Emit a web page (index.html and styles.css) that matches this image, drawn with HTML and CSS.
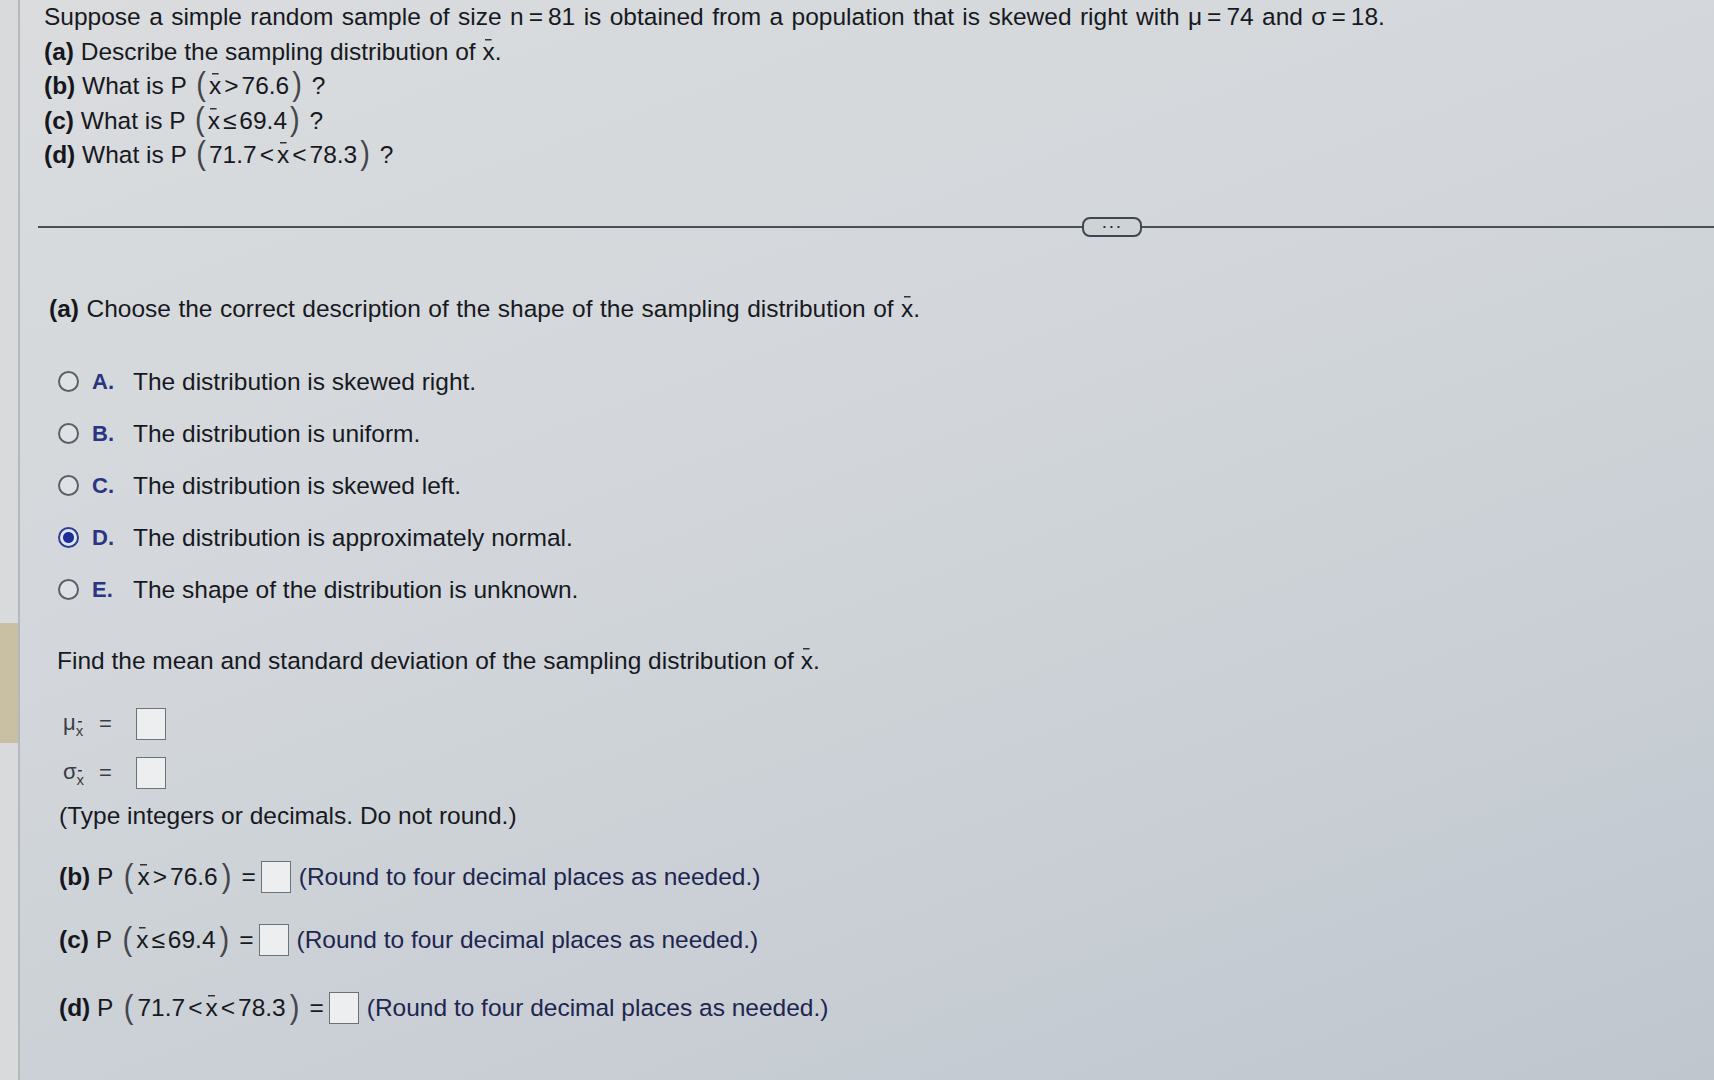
FILE: index.html
```html
<!DOCTYPE html>
<html>
<head>
<meta charset="utf-8">
<link rel="stylesheet" href="styles.css">
</head>
<body>
<div class="page">
  <div class="rail"><div class="rail-mark"></div></div>
  <main class="content">
    <section class="question">
      <p class="line title">Suppose a simple random sample of size n<span class="op">=</span>81 is obtained from a population that is skewed right with μ<span class="op">=</span>74 and σ<span class="op">=</span>18.</p>
      <p class="line"><b>(a)</b> Describe the sampling distribution of <span class="xbar">x</span>.</p>
      <p class="line"><b>(b)</b> What is P <span class="par">(</span><span class="xbar">x</span><span class="op">&gt;</span>76.6<span class="par">)</span> ?</p>
      <p class="line"><b>(c)</b> What is P <span class="par">(</span><span class="xbar">x</span><span class="op">≤</span>69.4<span class="par">)</span> ?</p>
      <p class="line"><b>(d)</b> What is P <span class="par">(</span>71.7<span class="op">&lt;</span><span class="xbar">x</span><span class="op">&lt;</span>78.3<span class="par">)</span> ?</p>
    </section>

    <div class="divider">
      <span class="rule rule-left"></span>
      <span class="more">• • •</span>
      <span class="rule"></span>
    </div>

    <section class="part-a">
      <p class="prompt"><b>(a)</b> Choose the correct description of the shape of the sampling distribution of <span class="xbar">x</span>.</p>
      <ul class="options">
        <li class="option"><span class="radio"></span><span class="letter">A.</span><span class="otext">The distribution is skewed right.</span></li>
        <li class="option"><span class="radio"></span><span class="letter">B.</span><span class="otext">The distribution is uniform.</span></li>
        <li class="option"><span class="radio"></span><span class="letter">C.</span><span class="otext">The distribution is skewed left.</span></li>
        <li class="option"><span class="radio checked"></span><span class="letter">D.</span><span class="otext">The distribution is approximately normal.</span></li>
        <li class="option"><span class="radio"></span><span class="letter">E.</span><span class="otext">The shape of the distribution is unknown.</span></li>
      </ul>
    </section>

    <section class="part-mean">
      <p class="prompt find">Find the mean and standard deviation of the sampling distribution of <span class="xbar">x</span>.</p>
      <div class="eq"><span class="sym">μ<sub class="xbar">x</sub></span><span class="eqsign">=</span><span class="box"></span></div>
      <div class="eq"><span class="sym">σ<sub class="xbar">x</sub></span><span class="eqsign">=</span><span class="box"></span></div>
      <p class="hint">(Type integers or decimals. Do not round.)</p>
    </section>

    <section class="answers">
      <div class="ans ans-b"><b>(b)</b>&nbsp;P <span class="par">(</span><span class="xbar">x</span><span class="op">&gt;</span>76.6<span class="par">)</span><span class="eqs">=</span><span class="box"></span><span class="note">(Round to four decimal places as needed.)</span></div>
      <div class="ans ans-c"><b>(c)</b>&nbsp;P <span class="par">(</span><span class="xbar">x</span><span class="op">≤</span>69.4<span class="par">)</span><span class="eqs">=</span><span class="box"></span><span class="note">(Round to four decimal places as needed.)</span></div>
      <div class="ans ans-d"><b>(d)</b>&nbsp;P <span class="par">(</span>71.7<span class="op">&lt;</span><span class="xbar">x</span><span class="op">&lt;</span>78.3<span class="par">)</span><span class="eqs">=</span><span class="box"></span><span class="note">(Round to four decimal places as needed.)</span></div>
    </section>
  </main>
</div>
</body>
</html>
```

FILE: styles.css
```css
html, body {
  margin: 0;
  padding: 0;
}
body {
  width: 1714px;
  height: 1080px;
  overflow: hidden;
  font-family: "Liberation Sans", Arial, sans-serif;
  color: #17191f;
  background: linear-gradient(160deg, #dadcde 0%, #d3d7db 40%, #c8ced4 75%, #bfc6ce 100%);
}
p { margin: 0; }
b { font-weight: bold; color: #15171d; }

.page {
  display: flex;
  height: 1080px;
}
.rail {
  width: 18px;
  flex: none;
  border-right: 2px solid #b4b9be;
  background: #d8dadb;
}
.rail-mark {
  margin-top: 623px;
  height: 120px;
  background: #c9c0a4;
}

.content {
  flex: 1;
  padding-left: 24px;
  font-size: 24.5px;
}

.line {
  line-height: 34.5px;
  white-space: nowrap;
}
.title {
  word-spacing: 1.6px;
}
.title .op { margin: 0 5px; }
.op { margin: 0 3px; }
.par {
  font-size: 29px;
  color: #44464c;
  margin: 0 3px;
  display: inline-block;
  transform: scaleY(1.15);
  line-height: 1;
}
.xbar {
  background-image: linear-gradient(#333, #333);
  background-repeat: no-repeat;
  background-position: center 2px;
  background-size: 55% 1.5px;
  padding-top: 1px;
}

.divider {
  display: flex;
  align-items: center;
  margin-top: 44px;
  margin-left: -6px;
  height: 20px;
}
.rule {
  flex: 1;
  height: 2px;
  background: #4a5058;
}
.rule.rule-left {
  flex: none;
  width: 1044px;
}
.more {
  flex: none;
  width: 56px;
  height: 16px;
  border: 2px solid #3f4650;
  border-radius: 8px;
  font-size: 8px;
  line-height: 16px;
  text-align: center;
  color: #222;
  letter-spacing: 1px;
  background: #ced3d8;
}

.part-a {
  margin-top: 57px;
}
.prompt {
  line-height: 30px;
  margin-left: 5px;
  white-space: nowrap;
}
.part-a .prompt {
  word-spacing: 0.7px;
}
.options {
  list-style: none;
  margin: 32px 0 0 0;
  padding: 0;
}
.option {
  display: flex;
  align-items: center;
  height: 52px;
  margin-left: 14px;
}
.radio {
  width: 17px;
  height: 17px;
  border: 2px solid #5b5f66;
  border-radius: 50%;
  flex: none;
  background: #dfe2e5;
  box-sizing: content-box;
}
.radio.checked {
  border-color: #2a3f8f;
  background: radial-gradient(circle, #1d2f96 0 5px, #dfe4ef 6px);
}
.letter {
  width: 41px;
  margin-left: 13px;
  color: #2a3582;
  font-weight: bold;
  font-size: 22px;
}
.otext {
  white-space: nowrap;
}

.part-mean {
  margin-top: 30px;
}
.find {
  margin-left: 13px;
  line-height: 30px;
}
.part-mean .find + .eq { margin-top: 24px; }
.eq {
  display: flex;
  align-items: center;
  height: 49px;
  margin-left: 19px;
}
.sym {
  width: 36px;
  font-size: 22px;
  color: #3a3d44;
}
.sym sub {
  font-size: 15px;
  vertical-align: -6px;
  background-position: center 0;
}
.eqsign {
  width: 37px;
  color: #3a3d44;
  font-size: 22px;
}
.box {
  display: inline-block;
  width: 28px;
  height: 30px;
  border: 1.5px solid #6d7178;
  background: #eceef0;
  flex: none;
}
.hint {
  margin-left: 15px;
  line-height: 36px;
  margin-top: 0;
}

.answers {
  margin-top: 23px;
}
.ans {
  display: flex;
  align-items: center;
  margin-left: 15px;
  height: 40px;
  white-space: pre;
}
.ans + .ans { margin-top: 23px; }
.ans-d { margin-top: 28px !important; }
.ans .par { margin: 0 4px; }
.eqs {
  margin: 0 5px 0 6px;
}
.note {
  margin-left: 8px;
  color: #1e2550;
}
```
